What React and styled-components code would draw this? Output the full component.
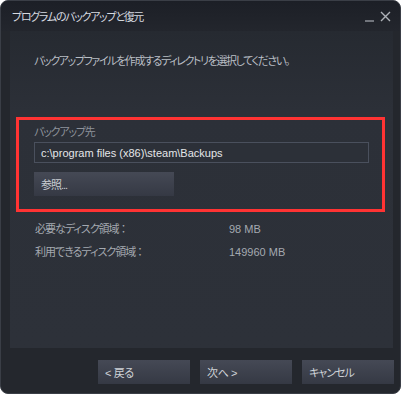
import React from "react";
import styled, { createGlobalStyle } from "styled-components";

const Global = createGlobalStyle`
  body {
    margin: 0;
    background: #ffffff;
    font-family: "Liberation Sans", Arial, "Noto Sans CJK JP", sans-serif;
    font-feature-settings: "palt";
  }
`;

const Window = styled.div`
  width: 401px;
  height: 394px;
  box-sizing: border-box;
  border-radius: 8px;
  border: 1px solid #3a3e46;
  background: #24272d;
  display: flex;
  flex-direction: column;
  overflow: hidden;
`;

const TitleBar = styled.div`
  height: 30px;
  flex: none;
  display: flex;
  align-items: center;
  justify-content: space-between;
  padding: 0 9px 0 11px;
  background: linear-gradient(to bottom, #1c1f26, #23262d);
`;

const Title = styled.div`
  font-size: 11px;
  color: #d6dae0;
  letter-spacing: -1.3px;
`;

const WinControls = styled.div`
  display: flex;
  align-items: center;
  gap: 6px;
`;

const Panel = styled.div`
  flex: 1;
  margin: 0 7px 0 9px;
  background: linear-gradient(to bottom, #262a31, #2c3038 25%, #2d3139);
  padding: 23px 0 0 0;
  display: flex;
  flex-direction: column;
`;

const Intro = styled.div`
  font-size: 11px;
  line-height: 14px;
  color: #b9bec4;
  padding-left: 24px;
  letter-spacing: -1.4px;
`;

const Highlight = styled.div`
  margin: 49px 8px 0 6px;
  border: 3px solid #ff3333;
  padding: 5px 13px 13px 15px;
  display: flex;
  flex-direction: column;
`;

const Label = styled.div`
  font-size: 11px;
  color: #8e939b;
  line-height: 14px;
  letter-spacing: -1.2px;
`;

const PathInput = styled.div`
  margin-top: 3px;
  height: 21px;
  box-sizing: border-box;
  border: 1px solid #4a505d;
  background: #2c3038;
  color: #e4e6e8;
  font-size: 11px;
  display: flex;
  align-items: center;
  padding-left: 6px;
`;

const Button = styled.div`
  width: ${(p) => p.$w || 92}px;
  height: 24px;
  box-sizing: border-box;
  display: flex;
  align-items: center;
  padding-left: 7px;
  font-size: 11px;
  color: #cfd3d8;
  background: linear-gradient(to bottom, #454955, #353944);
  letter-spacing: ${(p) => p.$ls ?? -0.4}px;
  white-space: pre;
`;

const Browse = styled(Button)`
  margin-top: 9px;
  color: #c9cdd2;
`;

const Info = styled.div`
  display: grid;
  grid-template-columns: 194px auto;
  row-gap: 6px;
  padding: 9px 0 0 25px;
  font-size: 11px;
  color: #a4a9b0;
  line-height: 17px;
`;

const InfoLabel = styled.span`
  letter-spacing: -1px;
`;

const Footer = styled.div`
  height: 45px;
  flex: none;
  display: flex;
  justify-content: flex-end;
  align-items: flex-start;
  gap: 10px;
  padding: 12px 6px 0 0;
  box-sizing: border-box;
`;

const X = () => (
  <svg width="11" height="11" viewBox="0 0 11 11">
    <path d="M1 1 L10 10 M10 1 L1 10" stroke="#aeb2b8" strokeWidth="1.4" />
  </svg>
);

const Minimize = () => (
  <svg width="9" height="11" viewBox="0 0 9 11">
    <path d="M0 10 H9" stroke="#8d9198" strokeWidth="1.4" />
  </svg>
);

export default function App() {
  return (
    <>
      <Global />
      <Window>
        <TitleBar>
          <Title>プログラムのバックアップと復元</Title>
          <WinControls>
            <Minimize />
            <X />
          </WinControls>
        </TitleBar>
        <Panel>
          <Intro>バックアップファイルを作成するディレクトリを選択してください。</Intro>
          <Highlight>
            <Label>バックアップ先</Label>
            <PathInput>c:\program files (x86)\steam\Backups</PathInput>
            <Browse $w={140} $ls={-1}>参照...</Browse>
          </Highlight>
          <Info>
            <InfoLabel>必要なディスク領域 ：</InfoLabel>
            <span>98 MB</span>
            <InfoLabel>利用できるディスク領域 ：</InfoLabel>
            <span>149960 MB</span>
          </Info>
        </Panel>
        <Footer>
          <Button>{"< 戻る"}</Button>
          <Button>{"次へ >"}</Button>
          <Button $ls={-1}>キャンセル</Button>
        </Footer>
      </Window>
    </>
  );
}
